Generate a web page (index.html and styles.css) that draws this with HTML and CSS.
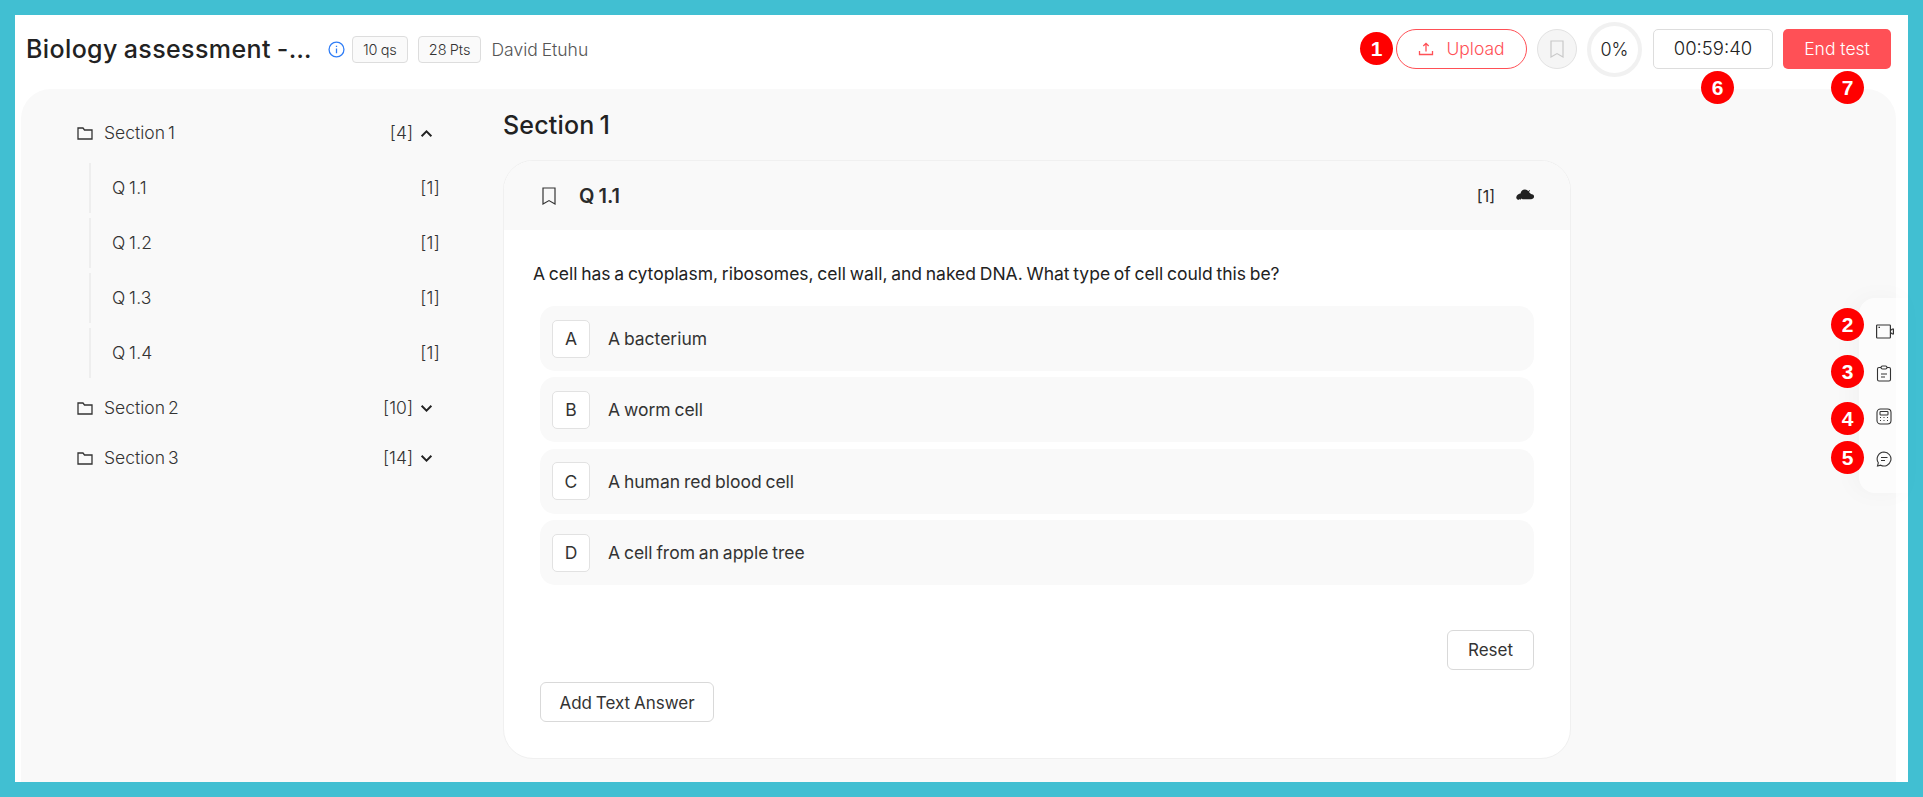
FILE: index.html
```html
<!DOCTYPE html>
<html lang="en">
<head>
    <meta charset="UTF-8" />
    <title>Biology assessment</title>
    <link rel="stylesheet" href="styles.css">
</head>
<body>
<div class="app">
    <!-- Top bar -->
    <header class="topbar">
        <div class="test-info">
            <h1 class="test-title">Biology assessment -…</h1>
            <svg class="info-icon" viewBox="0 0 16 16" fill="none" stroke="#2f7df6" stroke-width="1.2">
                <circle cx="8" cy="8" r="7"/>
                <path d="M8 7v4.600M8 4.400v1.200"/>
            </svg>
            <span class="tag tag-first">10 qs</span>
            <span class="tag">28 Pts</span>
            <span class="author">David Etuhu</span>
        </div>
        <div class="test-actions">
            <button class="upload-btn">
                <svg width="16" height="16" viewBox="0 0 16 16" fill="none" stroke="#ff5056" stroke-width="1.3">
                    <path d="M1.500 10v3.500h13V10M8 10.500V2.500M5.300 5L8 2.400 10.700 5"/>
                </svg>
                <span class="btn-text">Upload</span>
            </button>
            <button class="mark-btn">
                <svg width="14" height="18" viewBox="0 0 14 18" fill="none" stroke="#c9c9c9" stroke-width="1.2">
                    <path d="M1 1h12v16l-6-3.400L1 17z"/>
                </svg>
            </button>
            <div class="progress">0%</div>
            <div class="timer">00:59:40</div>
            <button class="end-btn">End test</button>
        </div>
    </header>

    <div class="panel">
        <!-- Section list -->
        <nav class="sidebar">
            <div class="section-row">
                <svg class="folder" viewBox="0 0 16 14" fill="none" stroke="#333" stroke-width="1.3"><path d="M1 2h5l1.500 2H15v9H1z"/></svg>
                <span class="section-name">Section 1</span>
                <span class="section-count">[4]</span>
                <svg class="chevron" viewBox="0 0 12 8" fill="none" stroke="#222" stroke-width="1.8"><path d="M1.500 6.500L6 2l4.500 4.500"/></svg>
            </div>
            <ul class="sub-list">
                <li class="sub-row"><span>Q 1.1</span><span>[1]</span></li>
                <li class="sub-row"><span>Q 1.2</span><span>[1]</span></li>
                <li class="sub-row"><span>Q 1.3</span><span>[1]</span></li>
                <li class="sub-row"><span>Q 1.4</span><span>[1]</span></li>
            </ul>
            <div class="section-row">
                <svg class="folder" viewBox="0 0 16 14" fill="none" stroke="#333" stroke-width="1.3"><path d="M1 2h5l1.500 2H15v9H1z"/></svg>
                <span class="section-name">Section 2</span>
                <span class="section-count">[10]</span>
                <svg class="chevron" viewBox="0 0 12 8" fill="none" stroke="#222" stroke-width="1.8"><path d="M1.500 1.500L6 6l4.500-4.500"/></svg>
            </div>
            <div class="section-row">
                <svg class="folder" viewBox="0 0 16 14" fill="none" stroke="#333" stroke-width="1.3"><path d="M1 2h5l1.500 2H15v9H1z"/></svg>
                <span class="section-name">Section 3</span>
                <span class="section-count">[14]</span>
                <svg class="chevron" viewBox="0 0 12 8" fill="none" stroke="#222" stroke-width="1.8"><path d="M1.500 1.500L6 6l4.500-4.500"/></svg>
            </div>
        </nav>

        <!-- Question -->
        <main class="content">
            <h2 class="section-title">Section 1</h2>
            <section class="card">
                <div class="card-head">
                    <svg width="14" height="18" viewBox="0 0 14 18" fill="none" stroke="#333" stroke-width="1.2"><path d="M1 1h12v16l-6-3.400L1 17z"/></svg>
                    <span class="q-label">Q 1.1</span>
                    <span class="q-points">[1]</span>
                    <svg class="cloud" width="18" height="11" viewBox="0 0 18 11" fill="#222"><path d="M.3 8C.8 5.800 3 4.800 4.500 4.500 5 2 6.800.4 9 .5c1.500.1 2.500.8 3.200 1.700L13.500 1l.5.4-1 1.500c.8.8 1.500 2 3 2.400 1.300.4 2.400 1.300 2 2.700-.3 1.400-1.400 2.200-3 2.200H6.500L5.500 9.600l-1 1.100-.8-.6-.7.7C1.500 10.800 0 9.800.3 8z"/></svg>
                </div>
                <div class="card-body">
                    <p class="question">A cell has a cytoplasm, ribosomes, cell wall, and naked DNA. What type of cell could this be?</p>
                    <div class="options">
                        <div class="option"><span class="letter">A</span>A bacterium</div>
                        <div class="option"><span class="letter">B</span>A worm cell</div>
                        <div class="option"><span class="letter">C</span>A human red blood cell</div>
                        <div class="option"><span class="letter">D</span>A cell from an apple tree</div>
                    </div>
                    <div class="reset-row"><button class="plain-btn reset-btn">Reset</button></div>
                    <button class="plain-btn add-answer">Add Text Answer</button>
                </div>
            </section>
        </main>
    </div>

    <!-- Floating tools -->
    <aside class="tools">
        <svg width="18" height="15" viewBox="0 0 18 15" fill="none" stroke="#333" stroke-width="1.2"><rect x=".6" y="1" width="13.800" height="13" rx=".8"/><path d="M14.400 6.500l2-1.500h1v5h-1l-2-1.500M2.500 3.300h1.500"/></svg>
        <svg width="16" height="17" viewBox="0 0 16 17" fill="none" stroke="#333" stroke-width="1.1"><path d="M5 2.500H3a1.500 1.500 0 0 0-1.500 1.500v10.500A1.500 1.500 0 0 0 3 16h10a1.500 1.500 0 0 0 1.500-1.500V4A1.500 1.500 0 0 0 13 2.500h-2"/><rect x="5" y="1" width="6" height="3" rx="1.500"/><path d="M5 9h6M5 12h4"/></svg>
        <svg width="16" height="17" viewBox="0 0 16 17" fill="none" stroke="#333" stroke-width="1.1"><rect x="1" y="1" width="14" height="15" rx="3.500"/><rect x="4" y="3.500" width="8" height="3.500" rx=".8"/><path d="M4 9.500h1M7.500 9.500h1M11 9.500h1M4 12.500h1M7.500 12.500h1M11 12.500h1"/></svg>
        <svg width="16" height="16" viewBox="0 0 16 16" fill="none" stroke="#333" stroke-width="1.1"><path d="M8 1a7 7 0 1 1-3.300 13.200L1.500 15l.8-3.200A7 7 0 0 1 8 1z"/><path d="M5 6.500h6.500M5 9.500h4"/></svg>
    </aside>

    <!-- Numbered callouts -->
    <span class="marker marker-1">1</span>
    <span class="marker marker-2">2</span>
    <span class="marker marker-3">3</span>
    <span class="marker marker-4">4</span>
    <span class="marker marker-5">5</span>
    <span class="marker marker-6">6</span>
    <span class="marker marker-7">7</span>
</div>
</body>
</html>
```

FILE: styles.css
```css
* {
box-sizing: border-box;
}
html, body {
height: 100%;
}
body {
margin: 0;
padding: 15px;
height: 797px;
background: #41bfd2;
font-family: Inter, "Noto Sans", sans-serif;
color: #2b2b2b;
overflow: hidden;
}
button {
font-family: inherit;
cursor: pointer;
}
.app {
position: relative;
height: 767px;
background: #fff;
display: flex;
flex-direction: column;
}

/* Top bar */
.topbar {
height: 74px;
flex-shrink: 0;
display: flex;
justify-content: space-between;
padding: 14px 17px 0 11px;
}
.test-info {
display: flex;
align-items: center;
height: 40px;
}
.test-title {
margin: 0 16px 0 0;
font-size: 25px;
font-weight: 500;
color: #222;
white-space: nowrap;
letter-spacing: 0.38px;
word-spacing: -1px;
}
.info-icon {
width: 17px;
height: 17px;
margin-right: 7px;
}
.tag {
height: 27px;
display: flex;
align-items: center;
padding: 0 10px;
font-size: 14.5px;
font-weight: 300;
border: 1px solid #ddd;
border-radius: 4px;
background: #fafafa;
color: #333;
margin-left: 10px;
word-spacing: -1px;
}
.tag-first {
margin-left: 0;
}
.author {
margin-left: 10px;
font-size: 17.5px;
font-weight: 300;
color: #555;
word-spacing: -1px;
}
.test-actions {
display: flex;
align-items: center;
height: 40px;
}
.upload-btn {
width: 131px;
height: 40px;
display: flex;
align-items: center;
justify-content: center;
gap: 12px;
border: 1px solid #ff5056;
border-radius: 20px;
background: #fff;
color: #ff5056;
font-size: 17.5px;
font-weight: 300;
}
.btn-text {
margin-bottom: 2px;
}
.mark-btn {
width: 40px;
height: 40px;
margin-left: 10px;
border: 1px solid #e2e2e2;
border-radius: 50%;
background: #f5f5f5;
display: flex;
align-items: center;
justify-content: center;
padding: 0;
}
.progress {
width: 55px;
height: 55px;
margin-left: 10px;
border: 4px solid #f1f1f1;
border-radius: 50%;
display: flex;
align-items: center;
justify-content: center;
font-size: 18px;
font-weight: 300;
color: #222;
}
.timer {
width: 120px;
height: 40px;
margin-left: 11px;
padding-bottom: 2px;
border: 1px solid #ddd;
border-radius: 5px;
display: flex;
align-items: center;
justify-content: center;
font-size: 18.5px;
font-weight: 300;
color: #222;
}
.end-btn {
width: 108px;
height: 40px;
margin-left: 10px;
padding-bottom: 3px;
border: none;
border-radius: 5px;
background: #ff5056;
color: #fff;
font-size: 17.5px;
font-weight: 300;
}

/* Main panel */
.panel {
flex: 1;
margin: 0 12px 0 6px;
padding: 23px 0 0 56px;
background: #f9f9f9;
border-radius: 30px 30px 0 0;
display: flex;
gap: 64px;
}
.sidebar {
width: 362px;
flex-shrink: 0;
margin-top: 1px;
color: #333;
font-weight: 300;
}
.section-row {
height: 40px;
display: flex;
align-items: center;
padding-right: 6px;
font-size: 17.5px;
word-spacing: -2px;
}
.folder {
width: 16px;
height: 14px;
margin-right: 11px;
}
.section-name {
flex: 1;
margin-bottom: 2px;
}
.section-count {
margin-right: 7px;
margin-bottom: 2px;
}
.chevron {
width: 13px;
height: 9px;
}
.sub-list {
list-style: none;
margin: 10px 0;
padding: 0;
display: flex;
flex-direction: column;
gap: 5px;
}
.sub-row {
height: 50px;
margin: 0 -1px 0 12px;
padding: 0 0 2px 21px;
border-left: 2px solid #eee;
display: flex;
align-items: center;
justify-content: space-between;
font-size: 17.5px;
letter-spacing: 0.2px;
word-spacing: -1.5px;
}
.sub-list + .section-row + .section-row {
margin-top: 10px;
}
.section-title {
margin: 0 0 21px;
font-size: 25px;
line-height: 26px;
padding-bottom: 1px;
font-weight: 500;
color: #222;
letter-spacing: 0.2px;
word-spacing: -2px;
}
.card {
width: 1068px;
height: 599px;
background: #fff;
border: 1px solid #f0f0f0;
border-radius: 30px;
overflow: hidden;
}
.card-head {
height: 69px;
background: #f9f9f9;
display: flex;
align-items: center;
padding: 0 36px 0 38px;
}
.q-label {
flex: 1;
margin-left: 23px;
font-size: 20px;
font-weight: 600;
color: #2b2b2b;
word-spacing: -1px;
}
.q-points {
margin-right: 21px;
font-size: 16px;
}
.cloud {
transform: translateY(-1px);
}
.card-body {
padding: 31px 36px 0 29px;
}
.question {
margin: 0 0 19px;
font-size: 17.5px;
line-height: 26px;
color: #222;
word-spacing: -1.2px;
}
.options {
margin-left: 7px;
display: flex;
flex-direction: column;
gap: 6.4px;
}
.option {
height: 65px;
padding-left: 12px;
background: #f9f9f9;
border-radius: 15px;
display: flex;
align-items: center;
font-size: 17.5px;
color: #333;
word-spacing: -1.1px;
}
.letter {
width: 38px;
height: 38px;
margin-right: 18px;
background: #fff;
border: 1px solid #e2e2e2;
border-radius: 5px;
display: flex;
align-items: center;
justify-content: center;
}
.reset-row {
display: flex;
justify-content: flex-end;
margin-top: 45px;
}
.plain-btn {
height: 40px;
padding: 0 18px;
background: #fff;
border: 1px solid #d9d9d9;
border-radius: 6px;
font-size: 17px;
color: #333;
word-spacing: -1px;
}
.reset-btn {
width: 87px;
padding: 0;
}
.add-answer {
width: 174px;
padding: 2px 0 0;
margin: 12px 0 0 7px;
}

/* Floating tools */
.tools {
position: absolute;
top: 283px;
right: 0;
width: 49px;
height: 195px;
padding: 0 0 0 17px;
background: rgba(255, 255, 255, 0.5);
border-radius: 16px 0 0 16px;
box-shadow: -6px 0 24px rgba(0, 0, 0, 0.03);
display: flex;
flex-direction: column;
align-items: flex-start;
justify-content: center;
gap: 26px;
}

/* Numbered callouts */
.marker {
position: absolute;
width: 33px;
height: 33px;
border-radius: 50%;
background: #f00;
color: #fff;
font-family: "Liberation Sans", Arial, sans-serif;
font-size: 21px;
font-weight: 700;
display: flex;
align-items: center;
justify-content: center;
}
.marker-1 { left: 1345px; top: 17px; }
.marker-2 { left: 1816px; top: 293px; }
.marker-3 { left: 1816px; top: 340px; }
.marker-4 { left: 1816px; top: 387px; }
.marker-5 { left: 1816px; top: 426px; }
.marker-6 { left: 1686px; top: 56px; }
.marker-7 { left: 1816px; top: 56px; }
```
